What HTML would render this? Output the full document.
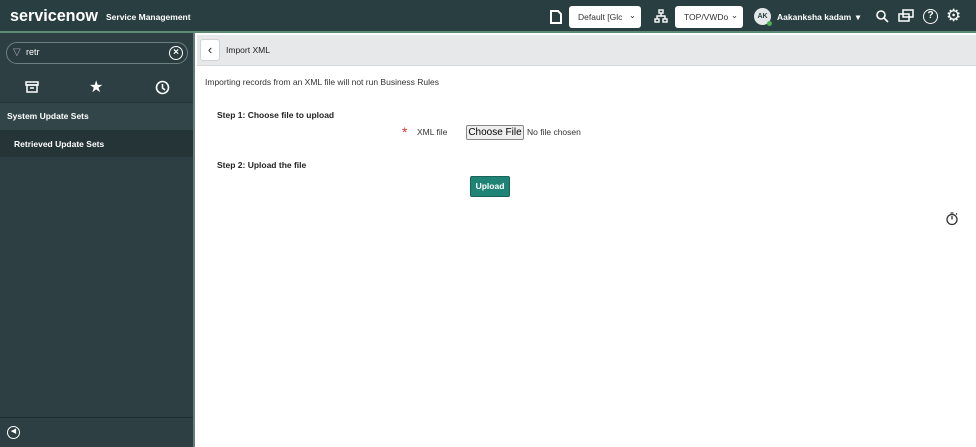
<!DOCTYPE html>
<html><head><style>
*{box-sizing:border-box;margin:0;padding:0}
body{width:976px;height:447px;overflow:hidden;font-family:"Liberation Sans",sans-serif;background:#fff;position:relative}
.hdr{position:absolute;left:0;top:0;width:976px;height:33px;background:#293e40;border-bottom:2px solid #5f8a75}
.side{position:absolute;left:0;top:33px;width:195px;height:414px;background:#2d3f42;border-right:2px solid #6b7b7d}
.t{position:absolute;white-space:nowrap}
.sel{position:absolute;top:6px;height:22px;background:#fff;border-radius:3px;font-size:8.5px;color:#333;padding:6px 0 0 9px}
</style></head><body>
<div class="hdr">
 <div class="t" style="left:10px;top:6px;font-size:17px;font-weight:bold;color:#fff;letter-spacing:0px;transform:scaleX(0.95);transform-origin:left">servicenow</div>
 <div class="t" style="left:106px;top:12px;font-size:8.5px;font-weight:bold;color:#fff">Service Management</div>
 <svg style="position:absolute;left:550px;top:10px" width="12" height="14"><path d="M1 1h7l3 3v9H1z" fill="none" stroke="#fff" stroke-width="2"/></svg>
 <div class="sel" style="left:569px;width:72px">Default [Glc<span style="position:absolute;right:5px;top:4px">⌄</span></div>
 <svg style="position:absolute;left:654px;top:9px" width="14" height="14" fill="none" stroke="#fff" stroke-width="1.4"><rect x="5" y="1" width="4" height="3"/><rect x="1" y="10" width="4" height="3"/><rect x="9" y="10" width="4" height="3"/><path d="M7 4v3M3 10V7h8v3"/></svg>
 <div class="sel" style="left:675px;width:68px">TOP/VWDo<span style="position:absolute;right:5px;top:4px">⌄</span></div>
 <div style="position:absolute;left:754px;top:8px;width:17px;height:17px;border-radius:50%;background:#e5e8e8;font-size:7px;font-weight:bold;color:#293e40;text-align:center;line-height:17px">AK</div>
 <div style="position:absolute;left:767px;top:21px;width:5px;height:5px;border-radius:50%;background:#4caf50"></div>
 <div class="t" style="left:777px;top:12px;font-size:8.5px;font-weight:bold;color:#fff">Aakanksha kadam&nbsp; ▾</div>
 <svg style="position:absolute;left:875px;top:9px" width="14" height="14" fill="none" stroke="#fff" stroke-width="1.6"><circle cx="6" cy="6" r="4"/><path d="M9 9l4 4"/></svg>
 <svg style="position:absolute;left:898px;top:9px" width="16" height="14" fill="none" stroke="#fff" stroke-width="1.5"><rect x="5" y="1" width="10" height="7"/><rect x="1" y="5" width="10" height="7"/></svg>
 <div style="position:absolute;left:923px;top:9px;width:15px;height:15px;border:1.6px solid #fff;border-radius:50%;color:#fff;font-size:10px;font-weight:bold;text-align:center;line-height:12px">?</div>
 <div class="t" style="left:946px;top:6px;font-size:17px;color:#fff">⚙</div>
</div>
<div class="side">
 <div style="position:absolute;left:6px;top:9px;width:182px;height:22px;border:1.5px solid #6d8082;border-radius:11px;background:#2a3c3f"></div>
 <div class="t" style="left:13px;top:14px;font-size:10px;color:#aab">▽</div>
 <div class="t" style="left:26px;top:14px;font-size:9px;color:#fff">retr</div>
 <div style="position:absolute;left:169px;top:13px;width:14px;height:14px;border:1.6px solid #fff;border-radius:50%;color:#fff;font-size:10px;font-weight:bold;text-align:center;line-height:11px">×</div>
 <svg style="position:absolute;left:25px;top:48px" width="14" height="12" fill="none" stroke="#fff" stroke-width="1.5"><rect x="1" y="1" width="12" height="3"/><rect x="2" y="4" width="10" height="7"/><path d="M5 7h4"/></svg>
 <div class="t" style="left:89px;top:44px;font-size:16px;color:#fff">★</div>
 <svg style="position:absolute;left:155px;top:47px" width="15" height="15" fill="none" stroke="#fff" stroke-width="1.6"><circle cx="7.5" cy="7.5" r="6"/><path d="M7.5 4v4l2.5 2"/></svg>
 <div style="position:absolute;left:0;top:69px;width:193px;height:28px;background:#324649;border-top:1px solid #263638"></div>
 <div class="t" style="left:7px;top:78px;font-size:8.5px;font-weight:bold;color:#fff">System Update Sets</div>
 <div style="position:absolute;left:0;top:97px;width:193px;height:27px;background:#243437"></div>
 <div class="t" style="left:14px;top:106px;font-size:8.5px;font-weight:bold;color:#fff">Retrieved Update Sets</div>
 <div style="position:absolute;left:0;top:384px;width:193px;height:1px;background:#1f2e30"></div>
 <div style="position:absolute;left:7px;top:393px;width:13px;height:13px;border:1.6px solid #fff;border-radius:50%;color:#fff;font-size:7px;text-align:center;line-height:10px">◀</div>
</div>
<div style="position:absolute;left:197px;top:35px;width:779px;height:31px;background:#e6e8ea;border-bottom:1px solid #d5d8da"></div>
<div style="position:absolute;left:200px;top:39px;width:20px;height:22px;background:#fff;border:1px solid #d0d3d5;border-radius:3px;font-size:13px;text-align:center;line-height:20px;color:#222">‹</div>
<div class="t" style="left:226px;top:45px;font-size:8.5px;color:#222">Import XML</div>
<div class="t" style="left:205px;top:77px;font-size:8.5px;color:#333">Importing records from an XML file will not run Business Rules</div>
<div class="t" style="left:217px;top:110px;font-size:8.5px;font-weight:bold;color:#222">Step 1: Choose file to upload</div>
<div class="t" style="left:402px;top:124px;font-size:14px;color:#d33">*</div>
<div class="t" style="left:417px;top:127px;font-size:8.5px;color:#333">XML file</div>
<div style="position:absolute;left:466px;top:125px;width:58px;height:15px;background:#efefef;border:1px solid #888;border-radius:2px;font-size:10px;text-align:center;line-height:13px;color:#000">Choose File</div>
<div class="t" style="left:527px;top:127px;font-size:8.5px;color:#333">No file chosen</div>
<div class="t" style="left:217px;top:160px;font-size:8.5px;font-weight:bold;color:#222">Step 2: Upload the file</div>
<div style="position:absolute;left:470px;top:176px;width:40px;height:21px;background:#1f8476;border:1px solid #176358;border-radius:2px;font-size:8.5px;font-weight:bold;color:#fff;text-align:center;line-height:19px">Upload</div>
<svg style="position:absolute;left:945px;top:211px" width="14" height="15" fill="none" stroke="#333" stroke-width="1.3"><circle cx="7" cy="8.5" r="5"/><path d="M7 8.5V5M5.5 2h3M11 3.5l1-1"/></svg>
</body></html>
